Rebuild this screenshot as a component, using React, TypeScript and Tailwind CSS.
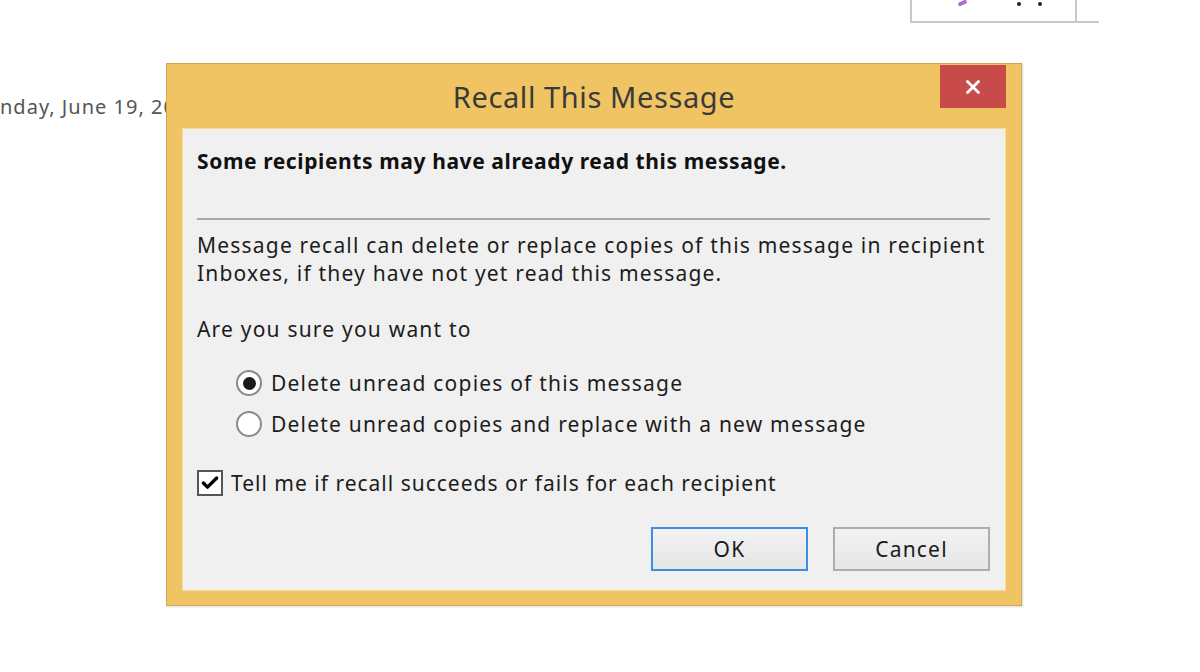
import { X, Check } from "lucide-react";

const font = { fontFamily: '"Noto Sans", "Open Sans", sans-serif' };

function Radio({ checked, label }: { checked?: boolean; label: string }) {
    return (
        <div className="flex items-center gap-[9px] h-[28px]">
            <div className="w-[26px] h-[26px] rounded-full border-2 border-[#8a8a8a] bg-white flex items-center justify-center">
                {checked && <div className="w-[13px] h-[13px] rounded-full bg-[#1a1a1a]" />}
            </div>
            <span>{label}</span>
        </div>
    );
}

function Button({ label, primary }: { label: string; primary?: boolean }) {
    return (
        <button
            className={
                primary
                    ? "w-[157px] h-[44px] border-2 border-[#3d8ee0] bg-gradient-to-b from-[#f2f2f2] to-[#e6e6e6] text-[#1a1a1a]"
                    : "w-[157px] h-[44px] border-2 border-[#adadad] bg-gradient-to-b from-[#f2f2f2] to-[#e6e6e6] text-[#1a1a1a]"
            }
        >
            {label}
        </button>
    );
}

export default function App() {
    return (
        <div className="relative w-[1200px] h-[672px] bg-white overflow-hidden" style={font}>
            {/* stuff behind the dialog */}
            <div className="absolute left-0 top-[92px] text-[20px] tracking-[1px] text-[#555] whitespace-nowrap">nday, June 19, 2017</div>
            <div className="absolute left-[910px] top-[-4px] w-[189px] h-[27px] border-b-2 border-[#c8c8c8]">
                <div className="absolute left-0 top-0 w-[2px] h-full bg-[#c8c8c8]" />
                <div className="absolute left-[165px] top-0 w-[2px] h-full bg-[#c8c8c8]" />
                <div className="absolute left-[48px] top-[5px] w-[9px] h-[4px] rounded-full bg-[#b06ad8] -rotate-[25deg]" />
                <div className="absolute left-[107px] top-[6px] w-[4px] h-[4px] rounded-full bg-[#222]" />
                <div className="absolute left-[128px] top-[6px] w-[4px] h-[4px] rounded-full bg-[#222]" />
            </div>

            <div className="relative pt-[63px] pl-[166px]">
                <div className="w-[856px] h-[543px] bg-[#f0c462] border border-[#d4a84e] flex flex-col shadow-[1px_1px_2px_rgba(0,0,0,0.15)]">
                    <div className="h-[64px] flex relative">
                        <div className="flex-1 text-center text-[29px] tracking-[0.6px] text-[#3a3a3a] pt-[11px]">Recall This Message</div>
                        <div className="absolute right-[15px] top-[1px] w-[66px] h-[43px] bg-[#c94a4b] flex items-center justify-center">
                            <X className="w-[22px] h-[22px] text-white" strokeWidth={3} />
                        </div>
                    </div>
                    <div className="mx-[15px] mb-[14px] flex-1 bg-[#f0f0f0] border border-[#f6dd9a] pl-[14px] pr-[15px] text-[21px] tracking-[1.2px] text-[#1c1c1c] leading-[28px]">
                        <p className="font-bold text-[#111] mt-[18px] tracking-[0.6px]">Some recipients may have already read this message.</p>
                        <div className="mt-[43px] h-[2px] bg-[#a8a8a8]" />
                        <p className="mt-[11px] whitespace-nowrap">
                            Message recall can delete or replace copies of this message in recipient
                            <br />
                            Inboxes, if they have not yet read this message.
                        </p>
                        <p className="mt-[28px]">Are you sure you want to</p>
                        <div className="ml-[39px] mt-[26px] flex flex-col gap-[13px]">
                            <Radio checked label="Delete unread copies of this message" />
                            <Radio label="Delete unread copies and replace with a new message" />
                        </div>
                        <div className="mt-[31px] flex items-center gap-[8px] h-[28px]">
                            <div className="w-[26px] h-[26px] border-2 border-[#555] bg-white flex items-center justify-center">
                                <Check className="w-[20px] h-[20px] text-black" strokeWidth={4} />
                            </div>
                            <span className="tracking-[1px]">Tell me if recall succeeds or fails for each recipient</span>
                        </div>
                        <div className="mt-[30px] flex justify-end gap-[25px]">
                            <Button primary label="OK" />
                            <Button label="Cancel" />
                        </div>
                    </div>
                </div>
            </div>
        </div>
    );
}
